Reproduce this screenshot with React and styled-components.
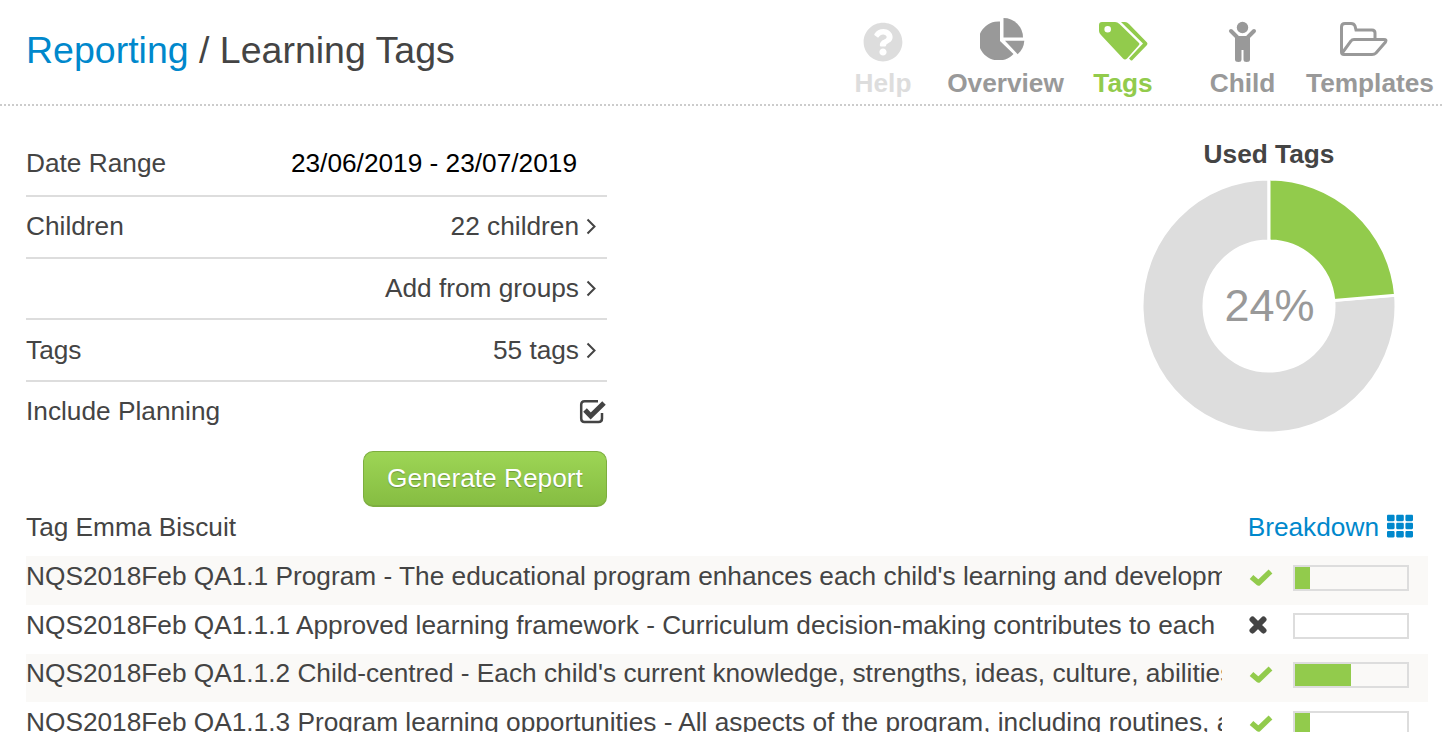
import React from "react";
import styled, { createGlobalStyle } from "styled-components";
import { FaQuestionCircle, FaTh } from "react-icons/fa";

const GREEN = "#92cb4c";
const GREY = "#999999";
const TEXT = "#444444";
const BLUE = "#0088cc";

const GlobalStyle = createGlobalStyle`
  html, body {
    margin: 0;
    padding: 0;
    background: #fff;
    overflow: hidden;
    font-family: "Liberation Sans", Arial, sans-serif;
  }
`;

const Page = styled.div`
  height: 732px;
  overflow: hidden;
  color: ${TEXT};
  font-size: 26.25px;
`;

// Header
const Header = styled.header`
  height: 104px;
  display: flex;
  justify-content: space-between;
  border-bottom: 2px dotted #cccccc;
  padding-left: 26px;
  padding-right: 9px;
`;

const PageTitle = styled.h1`
  margin: 27px 0 0;
  font-size: 37.5px;
  line-height: 46px;
  font-weight: 400;
  color: ${TEXT};
`;

const TitleLink = styled.a`
  color: ${BLUE};
`;

const Nav = styled.nav`
  display: flex;
`;

const NavItem = styled.div`
  width: ${({ $width }) => $width}px;
  height: 104px;
  display: flex;
  flex-direction: column;
  align-items: center;
  color: ${({ $color }) => $color};
`;

const NavIcon = styled.div`
  box-sizing: border-box;
  height: 65px;
  padding-top: ${({ $top }) => $top}px;
  margin-right: ${({ $shift }) => $shift || 0}px;
`;

const NavLabel = styled.div`
  line-height: 36px;
  font-weight: 700;
`;

// Filter form + chart
const Top = styled.section`
  display: flex;
  justify-content: space-between;
  padding-left: 26px;
  padding-right: 45px;
`;

const Form = styled.div`
  width: 581px;
  padding-top: 29.3px;
`;

const FormRow = styled.div`
  height: 59.67px;
  box-sizing: content-box;
  padding-bottom: ${({ $lift }) => $lift || 0}px;
  margin-top: ${({ $lift }) => -($lift || 0)}px;
  display: flex;
  align-items: center;
  justify-content: space-between;
  border-bottom: ${({ $plain }) => ($plain ? "none" : "2px solid #dddddd")};
`;

const RowValue = styled.div`
  display: flex;
  align-items: center;
  gap: 7px;
  margin-left: auto;
  color: ${({ $dark }) => ($dark ? "#000" : TEXT)};
  padding-right: ${({ $inset }) => $inset || 0}px;
`;

const Chevron = styled.svg`
  width: 10px;
  height: 17px;
  fill: none;
  stroke: ${TEXT};
  stroke-width: 2;
`;

const Actions = styled.div`
  display: flex;
  justify-content: flex-end;
  padding-top: 9.7px;
`;

const GenerateButton = styled.button`
  width: 244px;
  height: 56px;
  border: 1px solid #7dae3f;
  border-bottom-width: 2px;
  border-radius: 10px;
  background: linear-gradient(#9dd555, #86bd42);
  color: #fff;
  font-family: inherit;
  font-size: 26.3px;
  text-shadow: 0 1px 1px rgba(0, 0, 0, 0.25);
`;

const ChartBlock = styled.div`
  width: 256px;
  padding-top: 31px;
  text-align: center;
`;

const ChartTitle = styled.div`
  line-height: 34px;
  font-weight: 700;
`;

const DonutWrap = styled.div`
  position: relative;
  width: 256px;
  height: 256px;
  margin-top: 7px;
`;

const DonutLabel = styled.div`
  position: absolute;
  inset: 0;
  display: flex;
  align-items: center;
  justify-content: center;
  padding-left: 1px;
  font-size: 45px;
  color: ${GREY};
`;

// Tag list
const List = styled.section`
  padding: 0 14px 0 26px;
`;

const ListHead = styled.div`
  box-sizing: border-box;
  height: 49px;
  padding: 0 15px 8px 0;
  display: flex;
  align-items: center;
  justify-content: space-between;
`;

const Breakdown = styled.a`
  display: flex;
  align-items: center;
  gap: 8px;
  color: ${BLUE};
`;

const GridIcon = styled(FaTh)`
  margin-bottom: 4px;
`;

const TagRow = styled.div`
  box-sizing: border-box;
  height: 48.67px;
  padding-bottom: 8px;
  display: flex;
  align-items: center;
  background: ${({ $striped }) => ($striped ? "#faf9f7" : "#fff")};
`;

const TagName = styled.div`
  width: 1196px;
  white-space: nowrap;
  overflow: hidden;
`;

const Status = styled.div`
  box-sizing: border-box;
  width: 71px;
  padding-left: 27px;
  display: flex;
  align-items: center;
`;

const Bar = styled.div`
  box-sizing: border-box;
  width: 116px;
  height: 26px;
  margin-top: 2px;
  border: 2px solid #dddddd;
  background: ${({ $striped }) => ($striped ? "#faf9f7" : "#fff")};
`;

const BarFill = styled.div`
  height: 100%;
  background: ${GREEN};
`;

const PieIcon = () => (
  <svg width="45" height="42" viewBox="0 0 45 42" fill="currentColor">
    <path d="M20 3.5V23L33.5 36A20 19.5 0 1 1 20 3.5Z" />
    <path d="M23.5 0A19.5 19.5 0 0 1 43 19.5H23.5Z" />
    <path d="M25 22.7H44.3A20 20 0 0 1 37.7 36.3Z" />
  </svg>
);

const TagsIcon = () => (
  <svg width="49" height="39" viewBox="0 0 49 39" fill="currentColor">
    <path
      fillRule="evenodd"
      d="M3 0H16Q18.5 0 20.5 2L40 21Q41 22 40 23L28 36.5Q26 38.5 24 36.5L2 13Q0 11 0 9V3Q0 0 3 0ZM8.7 4A3.3 3.3 0 1 0 8.7 10.6 3.3 3.3 0 1 0 8.7 4Z"
    />
    <path d="M22 0H26Q28 0 30 2L48 20.5Q49 21.5 48 23L33.5 38Q32.5 39 31.5 38L30 36.5 44 21.5Z" />
  </svg>
);

const ChildIcon = () => (
  <svg width="30" height="41" viewBox="0 0 30 41" fill="currentColor">
    <circle cx="14.5" cy="6.5" r="5.7" />
    <path d="M7 15H22V38.5Q22 41 18.5 41 15.5 41 15.5 38.5V29H13.5V38.5Q13.5 41 10.5 41 7 41 7 38.5Z" />
    <path d="M3 10 9 16M26 10 20 16" stroke="currentColor" strokeWidth="4" strokeLinecap="round" />
  </svg>
);

const FolderIcon = () => (
  <svg width="50" height="36" viewBox="0 0 50 36" fill="none" stroke="currentColor" strokeWidth="3">
    <path d="M3.5 31V6Q3.5 2.5 7 2.5H13Q16 2.5 17 5L18 9H34Q37 9 37 12V17" />
    <path d="M3.5 31Q3.5 33.5 6 33.5H34Q36.5 33.5 38 32L47.5 21Q49 18.5 46 18.5H16Q14 18.5 13 20L3.5 33" />
  </svg>
);

const CheckIcon = () => (
  <svg width="24" height="18" viewBox="0 0 24 18" fill="none" stroke={GREEN} strokeWidth="5.5" strokeLinejoin="round">
    <path d="M2.5 9 9.5 15 21.5 3.5" />
  </svg>
);

const CrossIcon = () => (
  <svg width="18" height="18" viewBox="0 0 18 18" fill="none" stroke={TEXT} strokeWidth="6" strokeLinecap="round">
    <path d="M3.5 3.5 14.5 14.5M14.5 3.5 3.5 14.5" />
  </svg>
);

const CheckedBox = () => (
  <svg width="28" height="25" viewBox="0 0 28 25" fill="none" stroke={TEXT}>
    <path strokeWidth="2.5" d="M19 2.2H5.5Q2.2 2.2 2.2 5.5V19.5Q2.2 23 5.5 23H19.5Q23 23 23 19.5V14" />
    <path strokeWidth="5" d="M6 11 11.7 17 25 4" />
  </svg>
);

const polar = (r, deg) => {
  const a = ((deg - 90) * Math.PI) / 180;
  return [128 + r * Math.cos(a), 128 + r * Math.sin(a)];
};

const segment = (from, to) => {
  const [x1, y1] = polar(127, from);
  const [x2, y2] = polar(127, to);
  const [x3, y3] = polar(65, to);
  const [x4, y4] = polar(65, from);
  const large = to - from > 180 ? 1 : 0;
  return `M${x1} ${y1}A127 127 0 ${large} 1 ${x2} ${y2}L${x3} ${y3}A65 65 0 ${large} 0 ${x4} ${y4}Z`;
};

const Donut = ({ used, total }) => {
  const end = (used / total) * 360;
  return (
    <DonutWrap>
      <svg width="256" height="256" viewBox="0 0 256 256">
        <path d={segment(end, 360)} fill="#dddddd" stroke="#fff" strokeWidth="3" />
        <path d={segment(0, end)} fill={GREEN} stroke="#fff" strokeWidth="3" />
      </svg>
      <DonutLabel>{Math.round((used / total) * 100)}%</DonutLabel>
    </DonutWrap>
  );
};

const Arrow = () => (
  <Chevron viewBox="0 0 10 17">
    <path d="M1.5 1.5l7 7-7 7" />
  </Chevron>
);

const navItems = [
  { label: "Help", width: 120, color: "#dddddd", top: 22, icon: <FaQuestionCircle size={40} /> },
  { label: "Overview", width: 125, color: GREY, top: 18, shift: 6, icon: <PieIcon /> },
  { label: "Tags", width: 110, color: GREEN, top: 22, icon: <TagsIcon /> },
  { label: "Child", width: 129, color: GREY, top: 21, icon: <ChildIcon /> },
  { label: "Templates", width: 126, color: GREY, top: 21, shift: 14, icon: <FolderIcon /> },
];

const tags = [
  { name: "NQS2018Feb QA1.1 Program - The educational program enhances each child's learning and development.", used: true, fill: 13.5 },
  { name: "NQS2018Feb QA1.1.1 Approved learning framework - Curriculum decision-making contributes to each child's learning and development outcomes.", used: false, fill: 0 },
  { name: "NQS2018Feb QA1.1.2 Child-centred - Each child's current knowledge, strengths, ideas, culture, abilities and interests are the foundation of the program.", used: true, fill: 50 },
  { name: "NQS2018Feb QA1.1.3 Program learning opportunities - All aspects of the program, including routines, are organised in ways that maximise opportunities.", used: true, fill: 13.5 },
];

export default function App() {
  return (
    <Page>
      <GlobalStyle />
      <Header>
        <PageTitle>
          <TitleLink>Reporting</TitleLink> / Learning Tags
        </PageTitle>
        <Nav>
          {navItems.map((item) => (
            <NavItem key={item.label} $width={item.width} $color={item.color}>
              <NavIcon $top={item.top} $shift={item.shift}>{item.icon}</NavIcon>
              <NavLabel>{item.label}</NavLabel>
            </NavItem>
          ))}
        </Nav>
      </Header>

      <Top>
        <Form>
          <FormRow $lift={2}>
            Date Range
            <RowValue $dark $inset={30}>23/06/2019 - 23/07/2019</RowValue>
          </FormRow>
          <FormRow>
            Children
            <RowValue $inset={11}>22 children <Arrow /></RowValue>
          </FormRow>
          <FormRow>
            <RowValue $inset={11}>Add from groups <Arrow /></RowValue>
          </FormRow>
          <FormRow>
            Tags
            <RowValue $inset={11}>55 tags <Arrow /></RowValue>
          </FormRow>
          <FormRow $plain>
            Include Planning
            <RowValue><CheckedBox /></RowValue>
          </FormRow>
          <Actions>
            <GenerateButton>Generate Report</GenerateButton>
          </Actions>
        </Form>
        <ChartBlock>
          <ChartTitle>Used Tags</ChartTitle>
          <Donut used={13} total={55} />
        </ChartBlock>
      </Top>

      <List>
        <ListHead>
          Tag Emma Biscuit
          <Breakdown>Breakdown <GridIcon size={26} /></Breakdown>
        </ListHead>
        {tags.map((tag, i) => (
          <TagRow key={tag.name} $striped={i % 2 === 0}>
            <TagName>{tag.name}</TagName>
            <Status>{tag.used ? <CheckIcon /> : <CrossIcon />}</Status>
            <Bar $striped={i % 2 === 0}>
              <BarFill style={{ width: `${tag.fill}%` }} />
            </Bar>
          </TagRow>
        ))}
      </List>
    </Page>
  );
}
